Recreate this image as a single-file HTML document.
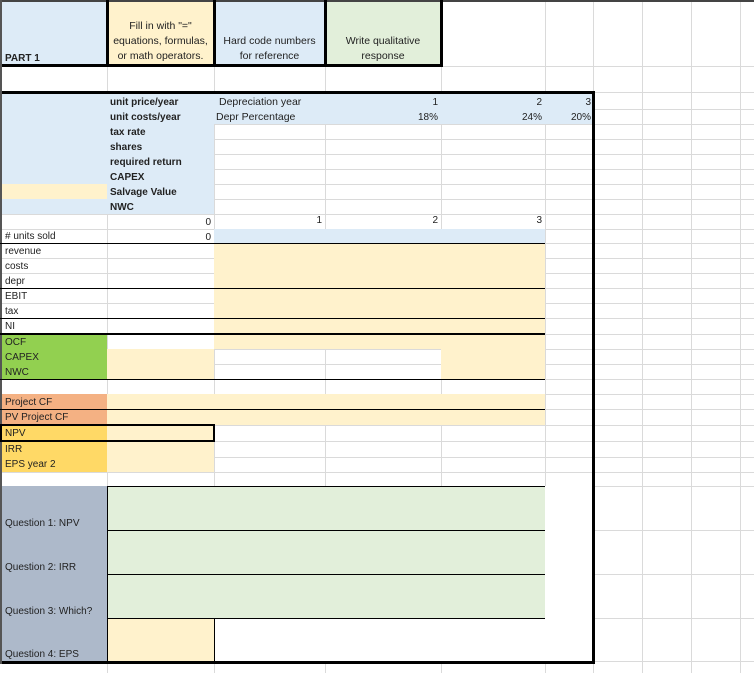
<!DOCTYPE html>
<html><head><meta charset="utf-8"><style>
body{margin:0;width:754px;height:673px;overflow:hidden;background:#fff;position:relative;font-family:"Liberation Sans",sans-serif;}
div{position:absolute;box-sizing:border-box}
.h{left:0;width:754px;height:1px;background:#dadada}
.v{top:0;height:673px;width:1px;background:#dadada}
.k{background:#000}
.t{font-size:10px;color:#222;white-space:nowrap;line-height:12px}
.r{text-align:right}
.c{text-align:center}
</style></head><body>
<div class="v" style="left:107px"></div><div class="v" style="left:214px"></div><div class="v" style="left:325px"></div><div class="v" style="left:441px"></div><div class="v" style="left:545px"></div><div class="v" style="left:593px"></div><div class="v" style="left:642px"></div><div class="v" style="left:691px"></div><div class="v" style="left:740px"></div>
<div class="h" style="top:66px"></div><div class="h" style="top:92px"></div><div class="h" style="top:109px"></div><div class="h" style="top:124px"></div><div class="h" style="top:139px"></div><div class="h" style="top:154px"></div><div class="h" style="top:169px"></div><div class="h" style="top:184px"></div><div class="h" style="top:199px"></div><div class="h" style="top:214px"></div><div class="h" style="top:229px"></div><div class="h" style="top:243px"></div><div class="h" style="top:258px"></div><div class="h" style="top:273px"></div><div class="h" style="top:288px"></div><div class="h" style="top:303px"></div><div class="h" style="top:318px"></div><div class="h" style="top:334px"></div><div class="h" style="top:349px"></div><div class="h" style="top:364px"></div><div class="h" style="top:379px"></div><div class="h" style="top:394px"></div><div class="h" style="top:409px"></div><div class="h" style="top:425px"></div><div class="h" style="top:441px"></div><div class="h" style="top:457px"></div><div class="h" style="top:472px"></div><div class="h" style="top:486px"></div><div class="h" style="top:530px"></div><div class="h" style="top:574px"></div><div class="h" style="top:618px"></div><div class="h" style="top:661px"></div>

<div style="left:0;top:2px;width:107px;height:64px;background:#ddebf7"></div>
<div style="left:107px;top:2px;width:107px;height:64px;background:#fff2cc"></div>
<div style="left:214px;top:2px;width:111px;height:64px;background:#ddebf7"></div>
<div style="left:325px;top:2px;width:116px;height:64px;background:#e2efda"></div>
<div class="k" style="left:0;top:0;width:754px;height:2px;background:#444"></div>
<div class="k" style="left:0;top:64px;width:443px;height:3px"></div>
<div class="k" style="left:106px;top:0;width:3px;height:66px"></div>
<div class="k" style="left:213px;top:0;width:3px;height:66px"></div>
<div class="k" style="left:324px;top:0;width:3px;height:66px"></div>
<div class="k" style="left:440px;top:0;width:3px;height:66px"></div>

<div style="left:0;top:94px;width:107px;height:120px;background:#ddebf7"></div>
<div style="left:0;top:184px;width:107px;height:15px;background:#fff2cc"></div>
<div style="left:107px;top:94px;width:107px;height:120px;background:#ddebf7"></div>
<div style="left:214px;top:94px;width:379px;height:30px;background:#ddebf7"></div>
<div style="left:214px;top:229px;width:331px;height:14px;background:#ddebf7"></div>
<div style="left:214px;top:243px;width:331px;height:106px;background:#fff2cc"></div>
<div style="left:0;top:334px;width:107px;height:45px;background:#92d050"></div>
<div style="left:107px;top:349px;width:107px;height:30px;background:#fff2cc"></div>
<div style="left:441px;top:349px;width:104px;height:30px;background:#fff2cc"></div>
<div style="left:0;top:394px;width:107px;height:31px;background:#f4b183"></div>
<div style="left:107px;top:394px;width:438px;height:31px;background:#fff2cc"></div>
<div style="left:0;top:425px;width:107px;height:47px;background:#ffd966"></div>
<div style="left:107px;top:425px;width:107px;height:47px;background:#fff2cc"></div>
<div style="left:0;top:486px;width:107px;height:175px;background:#adb9ca"></div>
<div style="left:107px;top:486px;width:438px;height:132px;background:#e2efda"></div>
<div style="left:107px;top:618px;width:107px;height:43px;background:#fff2cc"></div>
<div style="left:214px;top:618px;width:331px;height:43px;background:#fff"></div>
<div style="left:545px;top:486px;width:48px;height:175px;background:#fff"></div>

<div class="k" style="left:0;top:91px;width:595px;height:3px"></div>
<div class="k" style="left:592px;top:91px;width:3px;height:573px"></div>
<div class="k" style="left:0;top:661px;width:595px;height:3px"></div>
<div class="k" style="left:0;top:0;width:2px;height:664px;background:#555"></div>
<div class="k" style="left:0;top:243px;width:545px;height:1px"></div>
<div class="k" style="left:0;top:288px;width:545px;height:1px"></div>
<div class="k" style="left:0;top:318px;width:545px;height:1px"></div>
<div class="k" style="left:0;top:333px;width:545px;height:2px"></div>
<div class="k" style="left:0;top:379px;width:545px;height:1px"></div>
<div class="k" style="left:0;top:409px;width:545px;height:1px"></div>
<div style="left:0;top:424px;width:215px;height:18px;border:2px solid #000"></div>
<div class="k" style="left:107px;top:486px;width:438px;height:1px"></div>
<div class="k" style="left:107px;top:530px;width:438px;height:1px"></div>
<div class="k" style="left:107px;top:574px;width:438px;height:1px"></div>
<div class="k" style="left:107px;top:618px;width:438px;height:1px"></div>
<div class="k" style="left:107px;top:486px;width:1px;height:175px"></div>
<div class="k" style="left:214px;top:618px;width:1px;height:43px"></div>

<div class="t" style="left:5px;top:53px;font-weight:bold;font-size:10px">PART 1</div>
<div class="t c" style="left:107px;top:19px;width:107px;line-height:15px;font-size:10.5px">Fill in with "="<br>equations, formulas,<br>or math operators.</div>
<div class="t c" style="left:214px;top:34px;width:111px;line-height:15px;font-size:10.5px">Hard code numbers<br>for reference</div>
<div class="t c" style="left:325px;top:34px;width:116px;line-height:15px;font-size:10.5px">Write qualitative<br>response</div>

<div class="t" style="left:110px;top:95px;line-height:15px;font-weight:bold;font-size:10px">unit price/year<br>unit costs/year<br>tax rate<br>shares<br>required return<br>CAPEX<br>Salvage Value<br>NWC</div>
<div class="t" style="left:219px;top:95px;line-height:15px;font-size:10.5px">Depreciation year</div>
<div class="t" style="left:216px;top:110px;line-height:15px;font-size:10.5px">Depr Percentage</div>
<div class="t r" style="left:325px;top:95px;width:113px;line-height:15px">1<br>18%</div>
<div class="t r" style="left:441px;top:95px;width:101px;line-height:15px">2<br>24%</div>
<div class="t r" style="left:545px;top:95px;width:46px;line-height:15px">3<br>20%</div>
<div class="t r" style="left:107px;top:215px;width:104px;line-height:15px">0<br>0</div>
<div class="t r" style="left:214px;top:215px;width:108px">1</div>
<div class="t r" style="left:325px;top:215px;width:113px">2</div>
<div class="t r" style="left:441px;top:215px;width:101px">3</div>

<div class="t" style="left:5px;top:231px"># units sold</div>
<div class="t" style="left:5px;top:246px">revenue</div>
<div class="t" style="left:5px;top:261px">costs</div>
<div class="t" style="left:5px;top:276px">depr</div>
<div class="t" style="left:5px;top:291px">EBIT</div>
<div class="t" style="left:5px;top:306px">tax</div>
<div class="t" style="left:5px;top:321px">NI</div>
<div class="t" style="left:5px;top:337px">OCF</div>
<div class="t" style="left:5px;top:352px">CAPEX</div>
<div class="t" style="left:5px;top:367px">NWC</div>
<div class="t" style="left:5px;top:397px">Project CF</div>
<div class="t" style="left:5px;top:412px">PV Project CF</div>
<div class="t" style="left:5px;top:428px">NPV</div>
<div class="t" style="left:5px;top:444px">IRR</div>
<div class="t" style="left:5px;top:459px">EPS year 2</div>
<div class="t" style="left:5px;top:518px">Question 1: NPV</div>
<div class="t" style="left:5px;top:562px">Question 2: IRR</div>
<div class="t" style="left:5px;top:606px">Question 3: Which?</div>
<div class="t" style="left:5px;top:649px">Question 4: EPS</div>
</body></html>
